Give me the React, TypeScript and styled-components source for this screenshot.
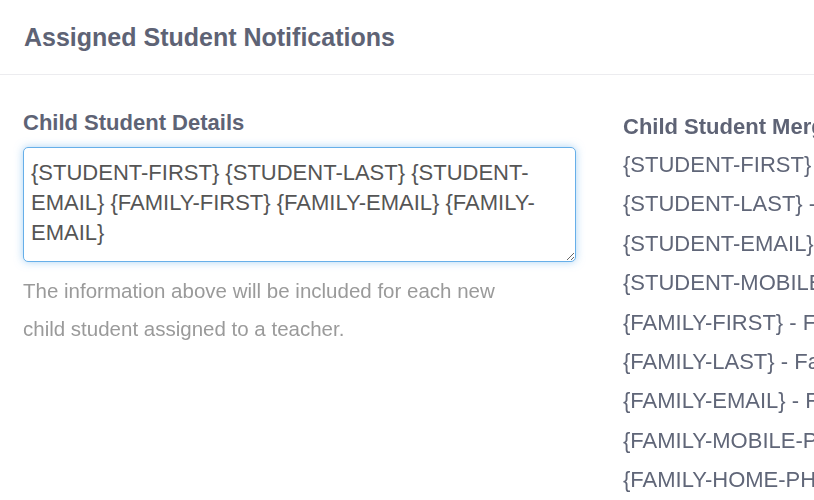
import React, { useEffect, useRef } from "react";
import styled, { createGlobalStyle } from "styled-components";

const GlobalStyle = createGlobalStyle`
  html, body {
    margin: 0;
    padding: 0;
    background: #ffffff;
    overflow: hidden;
  }
  body {
    font-family: "Liberation Sans", Arial, Helvetica, sans-serif;
  }
`;

const Page = styled.div`
  width: 814px;
  height: 500px;
  overflow: hidden;
`;

const Header = styled.div`
  height: 74px;
  padding: 0 24px;
  display: flex;
  align-items: center;
  border-bottom: 1px solid #ececef;
`;

const Title = styled.h2`
  margin: 0;
  font-size: 25px;
  font-weight: 700;
  color: #5e6375;
`;

const Body = styled.div`
  display: flex;
  gap: 47px;
  padding: 35px 23px 0 23px;
`;

const LeftColumn = styled.div`
  flex: 0 0 553px;
  display: flex;
  flex-direction: column;
`;

const RightColumn = styled.div`
  flex: 0 0 auto;
  white-space: nowrap;
  padding-top: 4px;
`;

const Label = styled.div<{ $gap: number }>`
  font-size: 22px;
  font-weight: 700;
  color: #5e6375;
  line-height: 26px;
  margin-bottom: ${(p) => p.$gap}px;
`;

const TextArea = styled.textarea`
  box-sizing: border-box;
  width: 553px;
  height: 115px;
  padding: 10px 7px;
  border: 1px solid #66afe9;
  border-radius: 5px;
  box-shadow: 0 0 8px rgba(102, 175, 233, 0.55);
  outline: none;
  font-family: "Liberation Sans", Arial, Helvetica, sans-serif;
  font-size: 22px;
  line-height: 30px;
  color: #555555;
  resize: vertical;
  caret-color: #333333;
`;

const Help = styled.p`
  margin: 10px 0 0 0;
  max-width: 505px;
  font-size: 20.5px;
  line-height: 38px;
  color: #9a9a9a;
`;

const FieldList = styled.ul`
  list-style: none;
  margin: 0;
  padding: 0;
`;

const Field = styled.li`
  font-size: 22px;
  line-height: 39.4px;
  color: #606678;
`;

const fields = [
  "{STUDENT-FIRST} - Student First Name",
  "{STUDENT-LAST} - Student Last Name",
  "{STUDENT-EMAIL} - Student Email",
  "{STUDENT-MOBILE-PHONE} - Student Mobile Phone",
  "{FAMILY-FIRST} - Family First Name",
  "{FAMILY-LAST} - Family Last Name",
  "{FAMILY-EMAIL} - Family Email",
  "{FAMILY-MOBILE-PHONE} - Family Mobile Phone",
  "{FAMILY-HOME-PHONE} - Family Home Phone",
];

const details =
  "{STUDENT-FIRST} {STUDENT-LAST} {STUDENT-EMAIL} {FAMILY-FIRST} {FAMILY-EMAIL} {FAMILY-EMAIL}";

export default function App() {
  const areaRef = useRef<HTMLTextAreaElement>(null);

  // put the caret where the screenshot shows it, after the last "{FAMILY-"
  useEffect(() => {
    const el = areaRef.current;
    if (!el) return;
    const pos = details.lastIndexOf("EMAIL}");
    el.focus();
    el.setSelectionRange(pos, pos);
  }, []);

  return (
    <Page>
      <GlobalStyle />
      <Header>
        <Title>Assigned Student Notifications</Title>
      </Header>
      <Body>
        <LeftColumn>
          <Label $gap={11}>Child Student Details</Label>
          <TextArea ref={areaRef} defaultValue={details} />
          <Help>
            The information above will be included for each new child student
            assigned to a teacher.
          </Help>
        </LeftColumn>
        <RightColumn>
          <Label $gap={5}>Child Student Merge Fields</Label>
          <FieldList>
            {fields.map((f) => (
              <Field key={f}>{f}</Field>
            ))}
          </FieldList>
        </RightColumn>
      </Body>
    </Page>
  );
}
